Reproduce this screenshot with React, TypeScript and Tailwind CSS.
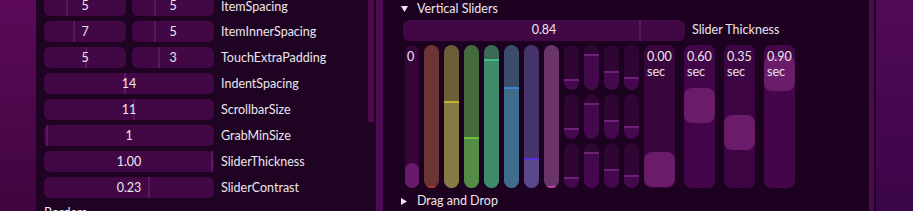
import React from 'react'

type HRow = { label: string; a: { v: string; g: number }; b?: { v: string; g: number } }

const rows: HRow[] = [
    { label: 'ItemSpacing', a: { v: '5', g: 22 }, b: { v: '5', g: 22 } },
    { label: 'ItemInnerSpacing', a: { v: '7', g: 29 }, b: { v: '5', g: 22 } },
    { label: 'TouchExtraPadding', a: { v: '5', g: 41 }, b: { v: '3', g: 26 } },
    { label: 'IndentSpacing', a: { v: '14', g: 80 } },
    { label: 'ScrollbarSize', a: { v: '11', g: 89 } },
    { label: 'GrabMinSize', a: { v: '1', g: 2 } },
    { label: 'SliderThickness', a: { v: '1.00', g: 167 } },
    { label: 'SliderContrast', a: { v: '0.23', g: 104 } },
]

function HSlider({ v, g, className }: { v: string; g: number; className: string }) {
    return (
        <div className={`relative flex items-center justify-center rounded-[6px] bg-[#420846] ${className}`}>
            <div className="absolute top-0 bottom-0 w-[2px] bg-[#5c1662]" style={{ left: g }} />
            <span className="relative leading-[12px]">{v}</span>
        </div>
    )
}

const colored = [
    { frame: '#6b3535', fill: '#6b3535', line: '#c03232', v: 0 },
    { frame: '#6b5f38', fill: '#857b42', line: '#c8b42c', v: 0.6 },
    { frame: '#456a3b', fill: '#548b45', line: '#6cc23e', v: 0.35 },
    { frame: '#3b6a57', fill: '#3f8b6c', line: '#3ec283', v: 0.9 },
    { frame: '#3b4d6a', fill: '#406d8b', line: '#3e86c8', v: 0.7 },
    { frame: '#45356a', fill: '#5a488b', line: '#5a32d2', v: 0.2 },
    { frame: '#6a3566', fill: '#6a3566', line: '#c83cb4', v: 0 },
]

function ColorSlider({ frame, fill, line, v }: { frame: string; fill: string; line: string; v: number }) {
    return (
        <div className="relative w-[15px] h-[143px] rounded-full overflow-hidden" style={{ background: frame }}>
            <div className="absolute left-0 right-0 bottom-0" style={{ height: `${v * 141 + 2}px`, background: fill }}>
                <div className="h-[2px]" style={{ background: line }} />
            </div>
        </div>
    )
}

function SmallSlider({ v }: { v: number }) {
    return (
        <div className="relative w-[15px] h-[45px] rounded-full overflow-hidden bg-[#2f0534]">
            <div className="absolute left-0 right-0 bottom-0 bg-[#44094c]" style={{ height: `${v * 43 + 2}px` }}>
                <div className="h-[2px] bg-[#6e2078]" />
            </div>
        </div>
    )
}

const secs = [
    { t: '0.00', v: 0, bg: '#38053d' },
    { t: '0.60', v: 0.6, bg: '#420549' },
    { t: '0.35', v: 0.35, bg: '#3d0543' },
    { t: '0.90', v: 0.9, bg: '#450549' },
]

function BigSlider({ t, v, bg }: { t: string; v: number; bg: string }) {
    return (
        <div className="relative w-[31px] h-[143px] rounded-[7px]" style={{ background: bg }}>
            <div
                className="absolute left-0 right-0 h-[35px] rounded-[8px] bg-[#6a1b69]"
                style={{ bottom: `${v * 107 + 1}px` }}
            />
            <div className="relative pl-[3px] pt-[4px] leading-[15px]">
                {t}
                <br />
                sec
            </div>
        </div>
    )
}

export default function App() {
    return (
        <div
            className="flex h-[211px] w-[913px] overflow-hidden bg-[#1d0220] text-[12.5px] text-[#ece6ec]"
            style={{ fontFamily: 'Lato, "Noto Sans", sans-serif' }}
        >
            <div className="w-[36px] shrink-0 bg-gradient-to-b from-[#5c0a58] to-[#400540]" />

            {/* left window */}
            <div className="relative flex w-[340px] shrink-0 bg-[#1f0323]">
                <div className="flex flex-col gap-[5px] pl-[8px] mt-[-4px]">
                    {rows.map((r, i) => {
                        const h = i === 0 ? 'h-[20px]' : 'h-[21px]'
                        return (
                            <div key={r.label} className={`flex shrink-0 items-center ${h}`}>
                                {r.b ? (
                                    <div className="flex h-full gap-[6px]">
                                        <HSlider v={r.a.v} g={r.a.g} className="w-[82px] h-full" />
                                        <HSlider v={r.b.v} g={r.b.g} className="w-[82px] h-full" />
                                    </div>
                                ) : (
                                    <HSlider v={r.a.v} g={r.a.g} className="w-[170px] h-full" />
                                )}
                                <span className="ml-[7px] pt-[1px] leading-[12px]">{r.label}</span>
                            </div>
                        )
                    })}
                    <div className="mt-[2px] shrink-0 leading-[16px]">Borders</div>
                </div>
                <div className="absolute right-[2px] top-0 w-[6px] h-[122px] bg-[#4a0a4b]" />
            </div>
            <div className="w-[7px] shrink-0 bg-[#4e0a52]" />

            {/* right window */}
            <div className="flex flex-1 flex-col bg-[#1c0220] pl-[18px]">
                <div className="flex h-[17px] items-center pt-[1px]">
                    <svg width="7" height="6" viewBox="0 0 7 6">
                        <path d="M0 0 H7 L3.5 6 Z" fill="#ece6ec" />
                    </svg>
                    <span className="ml-[9px]">Vertical Sliders</span>
                </div>
                <div className="mt-[3px] flex items-center">
                    <div className="relative flex h-[21px] w-[282px] ml-[2px] items-center justify-center rounded-[6px] bg-[#420846]">
                        <div className="absolute left-[236px] top-0 bottom-0 w-[2px] bg-[#5c1662]" />
                        <span className="relative">0.84</span>
                    </div>
                    <span className="ml-[7px]">Slider Thickness</span>
                </div>
                <div className="mt-[4px] ml-[4px] flex h-[143px] gap-[5px]">
                    <div className="relative w-[14px] h-[143px] rounded-[7px] bg-[#35053a]">
                        <div className="absolute left-0 right-0 bottom-0 h-[25px] rounded-[7px] bg-[#6a1a6a]" />
                        <div className="relative pl-[2px] pt-[4px] leading-[15px]">0</div>
                    </div>
                    {colored.map((c, i) => (
                        <ColorSlider key={i} {...c} />
                    ))}
                    {[0.2, 0.8, 0.4, 0.25].map((v, i) => (
                        <div key={i} className="flex flex-col justify-between">
                            <SmallSlider v={v} />
                            <SmallSlider v={v} />
                            <SmallSlider v={v} />
                        </div>
                    ))}
                    <div className="flex gap-[9px]">
                        {secs.map((s) => (
                            <BigSlider key={s.t} {...s} />
                        ))}
                    </div>
                </div>
                <div className="mt-[4px] flex h-[17px] items-center pt-[1px]">
                    <svg width="6" height="7" viewBox="0 0 6 7">
                        <path d="M0 0 L6 3.5 L0 7 Z" fill="#ece6ec" />
                    </svg>
                    <span className="ml-[10px]">Drag and Drop</span>
                </div>
            </div>
            <div className="w-[5px] shrink-0 bg-[#4a0a4c]" />
            <div className="w-[2px] shrink-0 bg-[#1a0220]" />
            <div className="w-[37px] shrink-0 bg-gradient-to-b from-[#520a58] to-[#3c0548]" />
        </div>
    )
}
